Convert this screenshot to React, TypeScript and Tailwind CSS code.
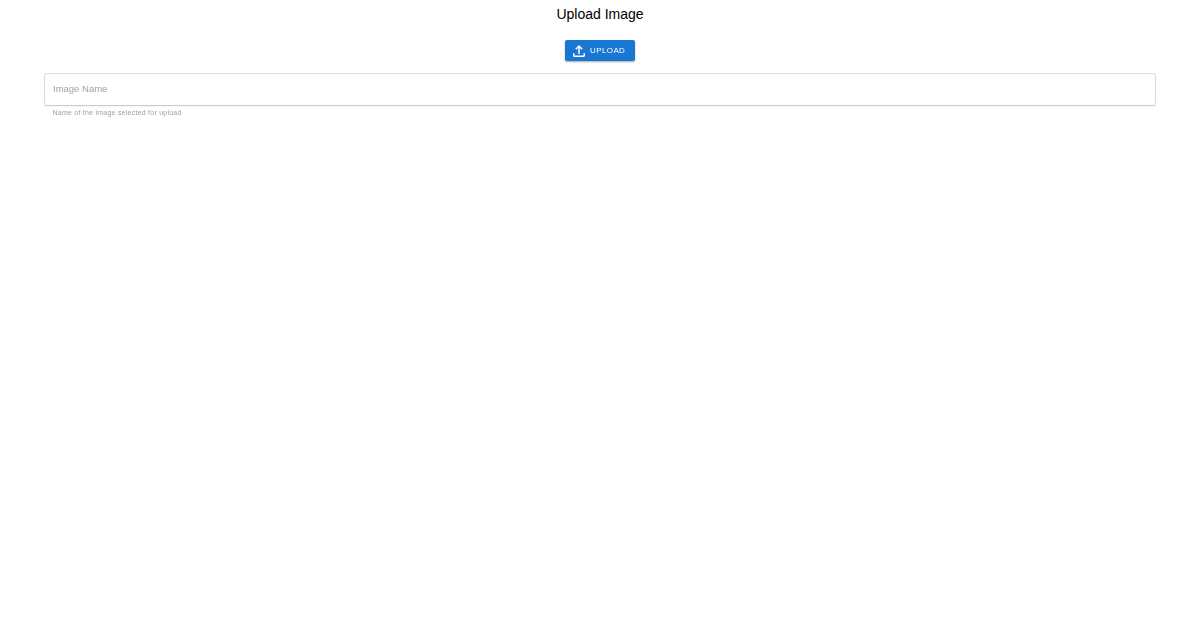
import React from "react";

export default function App() {
  return (
    <div className="min-h-[630px] bg-white font-['Liberation_Sans',Arial,sans-serif]">
      <div className="flex flex-col items-center pt-[5px]">
        <h1 className="text-[14px] leading-[18px] font-normal text-black">Upload Image</h1>
        <button className="mt-[17px] flex h-[21px] w-[70px] items-center gap-[2px] rounded-[2px] bg-[#1976d2] pl-[5px] text-[8px] tracking-[0.4px] text-white shadow-[0_1px_2px_rgba(0,0,0,0.35)]">
          <svg viewBox="0 0 24 24" className="h-[18px] w-[18px] fill-white">
            <path d="M18 15v3H6v-3H4v3c0 1.1.9 2 2 2h12c1.1 0 2-.9 2-2v-3h-2zM7 9l1.41 1.41L11 7.83V16h2V7.83l2.59 2.58L17 9l-5-5-5 5z" />
          </svg>
          <span className="will-change-transform">UPLOAD</span>
        </button>
      </div>
      <div className="mx-[44px] mt-[12px]">
        <div className="flex h-[33px] items-center rounded-[3px] border border-[#dcdcdc] border-b-[#cccccc] px-[8px] text-[9.5px] text-[#a0a0a0] shadow-[0_1px_0_rgba(0,0,0,0.03)]">
          <span className="will-change-transform">Image Name</span>
        </div>
        <p className="mt-[2px] px-[8px] text-[7px] leading-[9px] tracking-[0.24px] text-[#a0a0a0] will-change-transform">
          <span className="ml-[0.5px]">Name of the image selected for upload</span>
        </p>
      </div>
    </div>
  );
}
